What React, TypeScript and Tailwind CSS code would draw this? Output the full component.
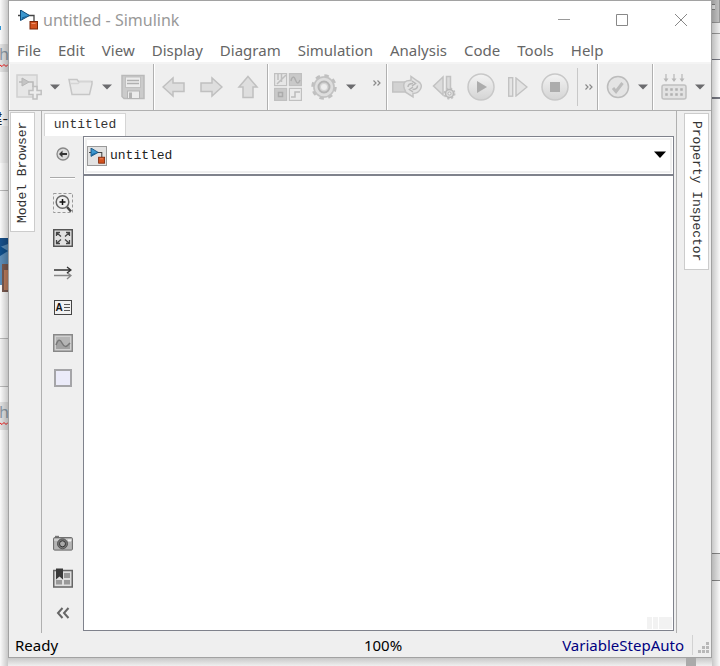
import type { ReactNode } from "react";

const MONO = "font-['Liberation_Mono',monospace] text-[13px]";

function ModelLogo({ size }: { size: number }) {
  return (
    <svg width={size} height={size} viewBox="0 0 20 20" aria-hidden="true">
      <path d="M0 5.500H16V12" fill="none" stroke="#444" strokeWidth="1.300" />
      <path d="M2.500 0V10.500L11.500 5.500Z" fill="#3b97cf" stroke="#0d4a78" strokeWidth="1" />
      <path d="M4 7.500V9L10 5.500Z" fill="#135b94" />
      <rect x="12" y="11.500" width="7.500" height="7.500" fill="#d2521f" stroke="#7b2507" />
      <path d="M13.500 13.500h4" stroke="#f0916a" />
    </svg>
  );
}

function Caret() {
  return (
    <svg width="10" height="6" viewBox="0 0 10 6" aria-hidden="true">
      <path d="M0 0.500H10L5 5.500Z" fill="#6b6b6e" />
    </svg>
  );
}

function More() {
  return (
    <svg width="10" height="8" viewBox="0 0 10 8" fill="none" stroke="#8a8a8a" strokeWidth="1.200" aria-hidden="true">
      <path d="M1.500 1.500 4 4 1.500 6.500M5.500 1.500 8 4 5.500 6.500" />
    </svg>
  );
}

function NewIcon() {
  return (
    <svg width="26" height="26" viewBox="0 0 26 26" fill="#ededed" stroke="#c0c0c0" strokeWidth="1.500" aria-hidden="true">
      <rect x="1" y="1" width="20" height="22" fill="#e6e6e6" stroke="#d0d0d0" />
      <path d="M3 8h3m7 0h4v5" fill="none" stroke="#b8b8b8" />
      <path d="M6 4v8l7-4Z" fill="#c4c4c4" stroke="#b5b5b5" strokeWidth="1" />
      <path d="M17 12.500h4v4h4.200v4H21v4.500h-4v-4.500h-4v-4h4Z" />
    </svg>
  );
}

function FolderIcon() {
  return (
    <svg width="26" height="20" viewBox="0 0 26 20" stroke="#c6c6c6" strokeWidth="1.500" aria-hidden="true">
      <path d="M1 2.500h8l1.500 2H24V7L21.500 17.500H4Z" fill="#e9e9e9" />
      <path d="M3 6.500h7l2-2h11" fill="none" stroke="#d5d5d5" />
    </svg>
  );
}

function SaveIcon() {
  return (
    <svg width="26" height="26" viewBox="0 0 26 26" aria-hidden="true">
      <path d="M2 1.500h22v23H4l-2-2Z" fill="#cbcbcb" stroke="#bababa" strokeWidth="1.500" />
      <rect x="5.500" y="3" width="15" height="10.500" fill="#ececec" stroke="#c0c0c0" />
      <path d="M7 6.500h12M7 9.500h12" stroke="#b0b0b0" strokeWidth="1.300" />
      <rect x="7.500" y="17" width="12" height="7.500" fill="#ececec" stroke="#b5b5b5" />
      <path d="M9 18.500h3v6H9Z" fill="#b3b3b3" />
    </svg>
  );
}

function ArrowIcon({ dir }: { dir: "left" | "right" | "up" }) {
  const d = {
    left: "M1 12 11 3V8H22V16.500H11V21Z",
    right: "M23 12 13 3V8H2V16.500H13V21Z",
    up: "M12 1.500 21 12H17V22.500H7V12H3Z",
  }[dir];
  return (
    <svg width="24" height="24" viewBox="0 0 24 24" aria-hidden="true">
      <path d={d} fill="#dedede" stroke="#c0c0c0" strokeWidth="1.500" />
    </svg>
  );
}

function LibraryIcon() {
  return (
    <svg width="28" height="28" viewBox="0 0 28 28" fill="none" stroke="#c0c0c0" strokeWidth="1.200" aria-hidden="true">
      <rect x="0.600" y="0.600" width="12" height="12" fill="#e6e6e6" />
      <rect x="15.400" y="0.600" width="12" height="12" fill="#c9c9c9" />
      <rect x="0.600" y="15.400" width="12" height="12" fill="#c9c9c9" />
      <rect x="15.400" y="15.400" width="12" height="12" fill="#ebebeb" />
      <path d="M4 1v6M7.500 1v8M3 11l9-9" stroke="#bebebe" strokeWidth="1.500" />
      <path d="M17 8c1-5 3-5 4.500-1s3 4 4.500 0" stroke="#adadad" strokeWidth="1.500" />
      <rect x="4.500" y="19.500" width="4" height="4" fill="#ccc" stroke="#ababab" strokeWidth="1.500" />
      <path d="M17 24h4v-5h5" stroke="#bcbcbc" strokeWidth="1.500" />
    </svg>
  );
}

function GearIcon() {
  return (
    <svg width="28" height="28" viewBox="0 0 28 28" aria-hidden="true">
      <circle cx="14" cy="14" r="11" fill="#dcdcdc" stroke="#c0c0c0" strokeWidth="3.500" strokeDasharray="4.320 4.320" />
      <circle cx="14" cy="14" r="10" fill="#dedede" stroke="#c2c2c2" strokeWidth="1.500" />
      <circle cx="14" cy="14" r="5.500" fill="#d4d4d4" stroke="#b4b4b4" strokeWidth="2" />
      <circle cx="14" cy="14" r="3" fill="#ededed" />
    </svg>
  );
}

function RefreshIcon() {
  return (
    <svg width="30" height="24" viewBox="0 0 30 24" fill="none" aria-hidden="true">
      <rect x="0.750" y="7" width="13" height="10" fill="#d2d2d2" stroke="#c2c2c2" strokeWidth="1.500" />
      <path d="M12.500 14C10 7 14 5 19 5.500V1.500L25.500 6c4 2 4.500 5 3 8s-4 4.500-7.500 4.500V22L14 17.500Z" fill="#e3e3e3" stroke="#c2c2c2" strokeWidth="1.500" />
      <path d="M16 12c0-3 2-3.500 5-3.500M25.500 10.500c0 3-2 4-5 4M20 6l3.500 2.500L20 11M21 12l-3.500 2.500L21 17" stroke="#b8b8b8" strokeWidth="1.500" />
    </svg>
  );
}

function StepBackIcon() {
  return (
    <svg width="24" height="26" viewBox="0 0 24 26" fill="#dcdcdc" stroke="#c2c2c2" strokeWidth="1.500" aria-hidden="true">
      <path d="M1.500 12 11 3V21Z" />
      <rect x="14.500" y="2.500" width="4" height="14" />
      <circle cx="17.500" cy="19.500" r="5" strokeWidth="2" strokeDasharray="2 1.930" />
      <circle cx="17.500" cy="19.500" r="4" stroke="#b8b8b8" />
      <circle cx="17.500" cy="19.500" r="1.500" fill="#eee" stroke="#b8b8b8" strokeWidth="1" />
    </svg>
  );
}

function RoundIcon({ kind }: { kind: "play" | "stop" }) {
  return (
    <svg width="28" height="28" viewBox="0 0 28 28" aria-hidden="true">
      <defs>
        <linearGradient id={`${kind}-face`} x1="0" y1="0" x2="0" y2="1">
          <stop offset="0" stopColor="#f3f3f3" />
          <stop offset="1" stopColor="#d4d4d4" />
        </linearGradient>
      </defs>
      <circle cx="14" cy="14" r="13" fill={`url(#${kind}-face)`} stroke="#c8c8c8" strokeWidth="1.500" />
      {kind === "play" ? <path d="M10 8V20L20 14Z" fill="#acacac" /> : <rect x="9" y="9" width="10" height="10" fill="#acacac" />}
    </svg>
  );
}

function StepIcon() {
  return (
    <svg width="20" height="20" viewBox="0 0 20 20" fill="#e4e4e4" stroke="#c2c2c2" strokeWidth="1.400" aria-hidden="true">
      <rect x="0.700" y="0.700" width="4" height="18.500" />
      <path d="M8 1V19L19 10Z" />
    </svg>
  );
}

function CheckIcon() {
  return (
    <svg width="24" height="24" viewBox="0 0 24 24" fill="none" aria-hidden="true">
      <circle cx="12" cy="12" r="10.500" fill="#e4e4e4" stroke="#bcbcbc" strokeWidth="1.500" />
      <path d="m7 13 3 3.500 6.500-8.500" stroke="#bcbcbc" strokeWidth="3" />
    </svg>
  );
}

function BuildIcon() {
  return (
    <svg width="26" height="26" viewBox="0 0 26 26" fill="none" aria-hidden="true">
      <path d="M5 0v7M13 0v7M21 0v7" stroke="#c0c0c0" strokeWidth="1.400" />
      <path d="M2.500 4.500h5L5 8ZM10.500 4.500h5L13 8ZM18.500 4.500h5L21 8Z" fill="#b8b8b8" />
      <rect x="1" y="11" width="24" height="14" rx="2" fill="#e2e2e2" stroke="#c0c0c0" strokeWidth="1.500" />
      <path d="M4.250 15.500h18M4.250 20.500h18" stroke="#b0b0b0" strokeWidth="2.500" strokeDasharray="2.500 2.500" />
    </svg>
  );
}

function ToolButton({ label, className = "", children }: { label: string; className?: string; children: ReactNode }) {
  return (
    <button type="button" aria-label={label} className={`flex shrink-0 items-center justify-center ${className}`}>
      {children}
    </button>
  );
}

function PaletteButton({ label, children }: { label: string; children: ReactNode }) {
  return (
    <button type="button" aria-label={label} className="flex h-[35px] w-full items-center justify-center">
      {children}
    </button>
  );
}

const GROUP = "flex shrink-0 items-center border-r border-[#b0b0b0] shadow-[inset_1px_0_0_#fff]";

function Toolbar() {
  return (
    <div role="toolbar" aria-label="Model" className="flex h-[49px] border-t-2 border-b border-t-[#f4f4f4] border-b-[#b0b0b0]">
      <div className={`${GROUP} gap-2 px-[7px]`}>
        <ToolButton label="New"><NewIcon /></ToolButton>
        <ToolButton label="New options"><Caret /></ToolButton>
        <ToolButton label="Open"><FolderIcon /></ToolButton>
        <ToolButton label="Open options"><Caret /></ToolButton>
        <ToolButton label="Save"><SaveIcon /></ToolButton>
      </div>
      <div className={`${GROUP} px-px`}>
        <ToolButton label="Back" className="w-[37px]"><ArrowIcon dir="left" /></ToolButton>
        <ToolButton label="Forward" className="w-[37px]"><ArrowIcon dir="right" /></ToolButton>
        <ToolButton label="Up to parent" className="w-[37px]"><ArrowIcon dir="up" /></ToolButton>
      </div>
      <div className={`${GROUP} gap-2 pr-1 pl-[6px]`}>
        <ToolButton label="Library browser"><LibraryIcon /></ToolButton>
        <ToolButton label="Model configuration"><GearIcon /></ToolButton>
        <ToolButton label="Configuration options"><Caret /></ToolButton>
        <ToolButton label="More model tools" className="pb-2 pl-2"><More /></ToolButton>
      </div>
      <div className={`${GROUP} px-px`}>
        <ToolButton label="Update diagram" className="w-[37px]"><RefreshIcon /></ToolButton>
        <ToolButton label="Step back" className="w-[37px]"><StepBackIcon /></ToolButton>
        <ToolButton label="Run" className="w-[37px]"><RoundIcon kind="play" /></ToolButton>
        <ToolButton label="Step forward" className="w-[37px]"><StepIcon /></ToolButton>
        <ToolButton label="Stop" className="w-[37px]"><RoundIcon kind="stop" /></ToolButton>
        <div className="ml-1 h-[38px] w-px bg-[#c8c8c8]" />
        <ToolButton label="More simulation tools" className="w-[18px] pl-1"><More /></ToolButton>
      </div>
      <div className={`${GROUP} gap-2 pr-1 pl-2`}>
        <ToolButton label="Model advisor"><CheckIcon /></ToolButton>
        <ToolButton label="Advisor options"><Caret /></ToolButton>
      </div>
      <div className="flex flex-1 items-center gap-2 pl-2 shadow-[inset_1px_0_0_#fff]">
        <ToolButton label="Build"><BuildIcon /></ToolButton>
        <ToolButton label="Build options"><Caret /></ToolButton>
      </div>
    </div>
  );
}

function Palette() {
  return (
    <div role="toolbar" aria-label="Palette" className="flex w-[41px] shrink-0 flex-col">
      <PaletteButton label="Hide explorer bar">
        <svg width="14" height="14" viewBox="0 0 14 14" fill="none" stroke="#888" aria-hidden="true">
          <circle cx="7" cy="7" r="6" fill="#dcdcdc" strokeWidth="1.300" />
          <path d="M3 7 6.500 3.500V6H11V8H6.500V10.500Z" fill="#333" stroke="none" />
        </svg>
      </PaletteButton>
      <div className="mx-2 mt-[6px] mb-[7px] h-px bg-[#aaa] shadow-[0_1px_0_#fff]" />
      <PaletteButton label="Zoom">
        <svg width="20" height="20" viewBox="0 0 20 20" fill="none" aria-hidden="true">
          <rect x="0.500" y="0.500" width="19" height="19" stroke="#999" strokeDasharray="3 2" />
          <path d="m14 14 4 4.500" stroke="#444" strokeWidth="2.500" />
          <circle cx="9.500" cy="9" r="6.300" fill="#eee" stroke="#666" strokeWidth="1.500" />
          <path d="M9.500 6v6M6.500 9h6" stroke="#111" strokeWidth="1.500" />
        </svg>
      </PaletteButton>
      <PaletteButton label="Fit to view">
        <svg width="20" height="18" viewBox="0 0 20 18" fill="none" aria-hidden="true">
          <rect x="0.750" y="0.750" width="18.500" height="16.500" fill="#e2e2e2" stroke="#555" strokeWidth="1.500" />
          <path d="M3.500 7V3.500H7M13 3.500h3.500V7M16.500 11v3.500H13M7 14.500H3.500V11M4 4l4 3.500M16 4l-4 3.500M4 14l4-3.500M16 14l-4-3.500" stroke="#444" strokeWidth="1.300" />
        </svg>
      </PaletteButton>
      <PaletteButton label="Sample time">
        <svg width="18" height="14" viewBox="0 0 18 14" fill="none" aria-hidden="true">
          <path d="M0 9.500h17M13 6.500l4 3-4 3.500" stroke="#888" strokeWidth="1.400" />
          <path d="M0 4h17M13 1l4 3-4 3" stroke="#333" strokeWidth="1.400" />
        </svg>
      </PaletteButton>
      <PaletteButton label="Annotation">
        <span className="flex h-[15px] w-[18px] items-center justify-center gap-px border border-[#444] bg-[#f1f1f1] font-['Liberation_Sans',sans-serif] text-[10px] leading-none font-bold text-[#111]">
          A
          <svg width="6" height="7" viewBox="0 0 6 7" stroke="#555" aria-hidden="true">
            <path d="M0 0.500H6M0 3.500H6M0 6.500H6" />
          </svg>
        </span>
      </PaletteButton>
      <PaletteButton label="Image">
        <svg width="20" height="18" viewBox="0 0 20 18" fill="none" aria-hidden="true">
          <rect x="0.750" y="0.750" width="18.500" height="16.500" fill="#d0d0d0" stroke="#888" strokeWidth="1.500" />
          <rect x="3" y="3" width="14" height="12" fill="#b5b5b5" />
          <path d="M3 11c2-6 4-6 6-2s4 5 8 1v5H3Z" fill="#a2a2a2" />
          <path d="M3 11c2-6 4-6 6-2s4 5 8 0" stroke="#777" strokeWidth="1.500" />
        </svg>
      </PaletteButton>
      <PaletteButton label="Area">
        <span className="h-[18px] w-[18px] border-2 border-[#a5a5a8] bg-[#ebebf9]" />
      </PaletteButton>
      <div className="mt-auto mb-px">
        <PaletteButton label="Snapshot">
          <svg width="20" height="16" viewBox="0 0 20 16" fill="none" aria-hidden="true">
            <path d="M2 .8h4v2H2Z" fill="#777" />
            <rect x="0.600" y="2.600" width="18.800" height="12.500" rx="1" fill="#b5b5b5" stroke="#666" />
            <path d="M1 5h18" stroke="#e2e2e2" />
            <circle cx="9.500" cy="8.800" r="5" fill="#777" stroke="#555" />
            <circle cx="9.500" cy="8.800" r="3" fill="#aaa" stroke="#333" />
            <path d="M15 4.500h3v2h-3Z" fill="#f2f2f2" />
          </svg>
        </PaletteButton>
        <PaletteButton label="Viewmarks">
          <svg width="20" height="20" viewBox="0 0 20 20" fill="none" aria-hidden="true">
            <rect x="0.750" y="2.500" width="18.500" height="16.500" fill="#dedede" stroke="#666" strokeWidth="1.500" />
            <path d="M11 5h6v5h-6ZM11 12h6v4.500h-6ZM3 12h6v4.500H3Z" fill="#999" />
            <path d="M3 0.500h7v11L6.500 8.500 3 11.500Z" fill="#3a3a3a" />
          </svg>
        </PaletteButton>
        <PaletteButton label="Collapse palette">
          <svg width="14" height="12" viewBox="0 0 14 12" fill="none" stroke="#666" strokeWidth="2" aria-hidden="true">
            <path d="M6.500 1 2 6l4.500 5M12.500 1 8 6l4.500 5" />
          </svg>
        </PaletteButton>
      </div>
    </div>
  );
}

function MisspeltEdge() {
  return (
    <div className="h-7 overflow-hidden bg-[#e3e3e3] font-['Noto_Sans',sans-serif] text-base leading-5 text-[#8c9aa6]">
      <span className="-ml-px block">h</span>
      <svg width="8" height="3" viewBox="0 0 8 3" fill="none" stroke="#e11" aria-hidden="true">
        <path d="M0 1 2 2.500 4 .5 6 2.500 8 .5" />
      </svg>
    </div>
  );
}

/* The document that shows past the left side of the window. */
function LeftBackdrop() {
  return (
    <div className="relative flex w-2 shrink-0 flex-col overflow-hidden">
      <div className="h-[26px]" />
      <div className="h-1 w-px bg-[#3096d6]" />
      <div className="h-[14px]" />
      <MisspeltEdge />
      <div className="h-9" />
      <div className="flex h-[18px] justify-end font-['Noto_Sans_CJK_SC',sans-serif] text-base leading-[18px] whitespace-nowrap text-[#222]">
        建-
      </div>
      <div className="h-[37px] bg-[#efefef]" />
      <div className="h-7 border-b border-[#bbb]" />
      <div className="h-[47px]" />
      <svg width="8" height="56" viewBox="0 0 8 56" aria-hidden="true">
        <path d="M0 0H8V47H0Z" fill="#5b8db8" />
        <path d="M0 0H8V6L0 9Z" fill="#17508a" />
        <path d="M0 8 8 13 0 18Z" fill="#0f4f8b" />
        <path d="M2 26H8V54H2Z" fill="#7b5a50" />
        <path d="M4 32H8V52H4Z" fill="#c08060" />
      </svg>
      <div className="h-[45px] border-b border-[#bbb]" />
      <div className="h-12 border-b border-[#bbb] bg-[#f2f2f2]" />
      <div className="h-[15px]" />
      <MisspeltEdge />
      <div className="absolute inset-0 bg-linear-to-r from-black/0 to-black/20" />
    </div>
  );
}

/* The second window that shows past the right side. */
function RightBackdrop() {
  return (
    <div className="relative flex w-2 shrink-0 flex-col overflow-hidden">
      <div className="h-[23px] border-r border-b border-[#999] bg-[#c4c4c4]">
        <div className="mt-1 mr-1 h-[6px] border-y border-[#888] bg-[#eee]" />
      </div>
      <div className="h-[11px] border-b border-[#999] bg-[#efefef]" />
      <div className="h-[26px] border-b border-[#777983] bg-[#efefef]" />
      <div className="h-[37px] bg-white" />
      <div className="h-[2px] bg-[#777983]" />
      <div className="flex-1" />
      <div className="h-7 border-y border-[#888] bg-[#e6e6e6]" />
      <div className="h-[85px]" />
      <div className="absolute inset-0 bg-linear-to-l from-black/0 to-black/20" />
    </div>
  );
}

function TitleBar() {
  return (
    <header className="flex h-[37px] items-center bg-white pl-[9px] text-[#999]">
      <ModelLogo size={20} />
      <h1 className="ml-[5px] flex-1 text-base">untitled - Simulink</h1>
      <div className="flex">
        <button type="button" aria-label="Minimize" className="flex w-[58px] justify-center">
          <svg width="14" height="14" viewBox="0 0 14 14" stroke="#999" aria-hidden="true"><path d="M1 6.500H13" /></svg>
        </button>
        <button type="button" aria-label="Maximize" className="flex w-[58px] justify-center">
          <svg width="14" height="14" viewBox="0 0 14 14" fill="none" stroke="#888" aria-hidden="true"><path d="M1.500 1.500h11v11h-11Z" /></svg>
        </button>
        <button type="button" aria-label="Close" className="flex w-[60px] justify-center">
          <svg width="14" height="14" viewBox="0 0 14 14" stroke="#888" aria-hidden="true"><path d="m1 1 12 12M13 1 1 13" /></svg>
        </button>
      </div>
    </header>
  );
}

const MENUS = ["File", "Edit", "View", "Display", "Diagram", "Simulation", "Analysis", "Code", "Tools", "Help"];

export default function App() {
  return (
    <div className="flex min-h-screen bg-[#fafafa] font-['Noto_Sans','Open_Sans',sans-serif]">
      <LeftBackdrop />
      <div className="flex min-w-0 flex-1 flex-col">
        <main className="flex flex-1 flex-col border border-[#a2a2a2] bg-[#efefef]">
          <TitleBar />
          <nav aria-label="Menu" className="flex h-6 items-center gap-[17px] bg-white pl-2 text-[15px] text-[#666]">
            {MENUS.map((name) => (
              <button key={name} type="button">{name}</button>
            ))}
          </nav>
          <Toolbar />
          <div className="flex flex-1">
            <aside className="flex w-[33px] shrink-0 items-start border-r border-[#b0b0b0] pt-px pl-px">
              <button type="button" className={`${MONO} flex h-[120px] w-[25px] rotate-180 items-center justify-center border border-[#ccc] bg-white text-[#333] [writing-mode:vertical-rl]`}>
                Model Browser
              </button>
            </aside>
            <div className="flex min-w-0 flex-1 flex-col pr-[2px] pb-[2px]">
              <div role="tablist" className="flex h-[25px] items-end pl-[2px]">
                <button type="button" role="tab" aria-selected="true" className={`${MONO} h-[23px] w-[82px] border border-b-0 border-[#d5d5d5] bg-white text-[#333]`}>
                  untitled
                </button>
              </div>
              <div className="flex flex-1">
                <Palette />
                <section className="flex min-w-0 flex-1 flex-col border border-[#7f828c] bg-white">
                  <div className="border-b-2 border-[#7f828c] p-px">
                    <div className="flex h-[35px] items-center border-2 border-[#f0f0f0] pr-1">
                      <span className="flex h-5 w-5 items-center justify-center border border-[#999] bg-[#e2e2e2]">
                        <ModelLogo size={16} />
                      </span>
                      <span className={`${MONO} ml-[3px] flex-1 text-[#222]`}>untitled</span>
                      <button type="button" aria-label="Model path">
                        <svg width="12" height="12" viewBox="0 0 12 12" aria-hidden="true"><path d="M0 1.500H12L6 8Z" fill="#000" /></svg>
                      </button>
                    </div>
                  </div>
                  <div className="flex flex-1 items-end justify-end gap-px pr-px pb-px">
                    <span className="h-3 w-[5px] bg-[#f2f2f2]" />
                    <span className="h-3 w-[5px] bg-[#f2f2f2]" />
                    <span className="h-3 w-[13px] bg-[#f2f2f2]" />
                  </div>
                </section>
              </div>
            </div>
            <aside className="flex w-[35px] shrink-0 items-start border-l border-[#b0b0b0] pt-[2px] pl-[7px]">
              <button type="button" className={`${MONO} flex h-[157px] w-[25px] items-center justify-center border border-[#ccc] bg-white text-[#333] [writing-mode:vertical-rl]`}>
                Property Inspector
              </button>
            </aside>
          </div>
          <footer className="grid h-6 grid-cols-[1fr_auto_1fr] items-center pl-[6px] text-[15px] text-black">
            <span>Ready</span>
            <span className="ml-10">100%</span>
            <div className="flex items-center justify-end">
              <a href="#solver" className="text-[#000080]">VariableStepAuto</a>
              <span className="ml-2 h-5 w-px bg-[#d2d2d2]" />
              <svg width="18" height="20" viewBox="0 0 18 20" fill="#b8b8b8" aria-hidden="true">
                <path d="M13 7h3v3h-3ZM13 11h3v3h-3ZM9 11h3v3H9ZM13 15h3v3h-3ZM9 15h3v3H9ZM5 15h3v3H5Z" />
              </svg>
            </div>
          </footer>
        </main>
        <div className="flex h-2 justify-end bg-linear-to-b from-[#c8c8c8] to-[#f0f0f0] pr-4">
          <span className="w-[10px] bg-[#aaa]" />
        </div>
      </div>
      <RightBackdrop />
    </div>
  );
}
